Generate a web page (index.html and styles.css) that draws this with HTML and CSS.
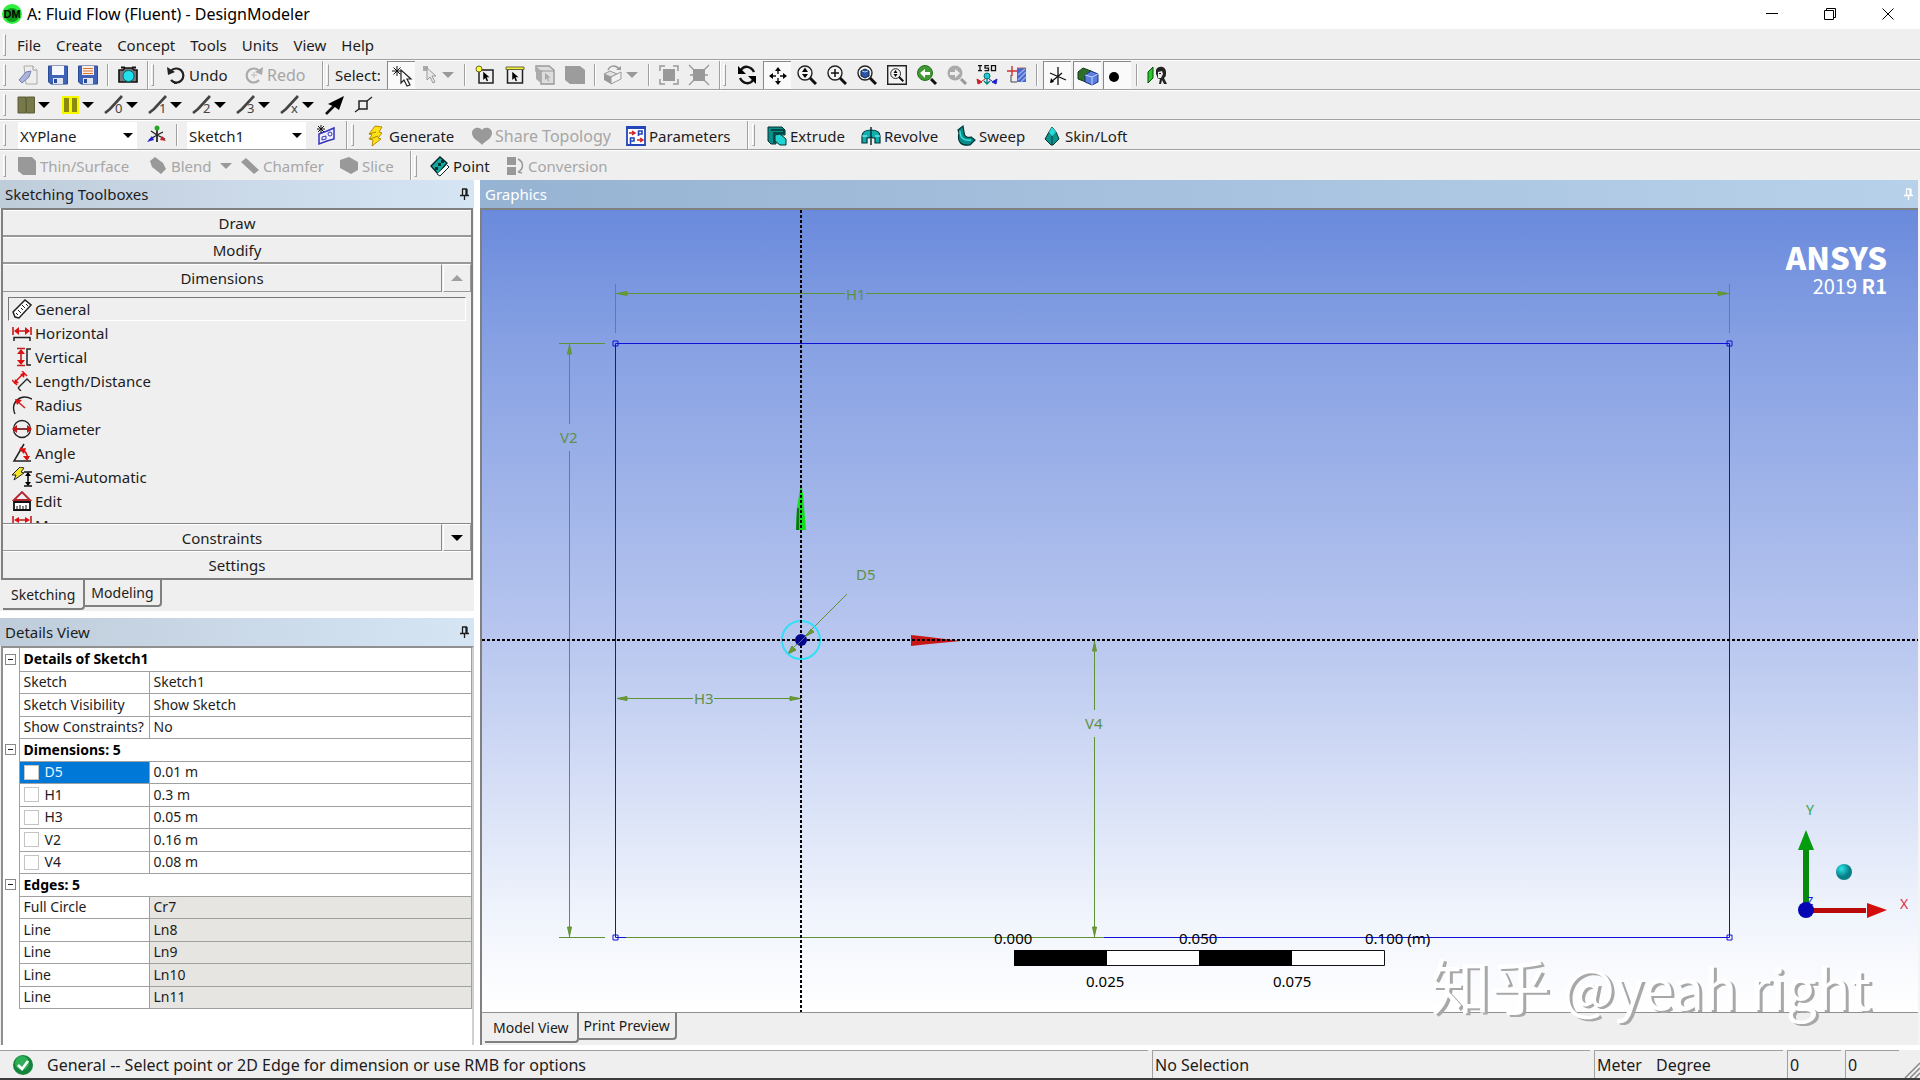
FILE: index.html
```html
<!DOCTYPE html>
<html lang="en">
<head>
<meta charset="utf-8">
<title>A: Fluid Flow (Fluent) - DesignModeler</title>
<link rel="stylesheet" href="styles.css">
</head>
<body>
<svg class="defs" aria-hidden="true">
  <symbol id="cursor" viewBox="0 0 10 16"><path d="M1 1v12l3-3 2 5 2-1-2-5h4z"/></symbol>
  <symbol id="lens" viewBox="0 0 20 20"><circle cx="8" cy="8" r="7" fill="#f4f4f4" stroke="#222" stroke-width="1.4"/><path d="M13 13l6 6" stroke="#111" stroke-width="3"/></symbol>
  <symbol id="edge" viewBox="0 0 20 20"><path d="M1 18l5-4L18 1" fill="none" stroke="#444" stroke-width="2.6"/></symbol>
  <symbol id="pin" viewBox="0 0 9 12"><path d="M2.500 1v6M2 1h5M6 1v6M7 1v6M0 7.500h9M4.500 8v4" fill="none" stroke="currentColor" stroke-width="1.300"/></symbol>
</svg>

<header class="titlebar">
  <svg class="app-icon" viewBox="0 0 20 20"><circle cx="10" cy="10" r="10" fill="#2cf03c"/><circle cx="10" cy="11" r="7" fill="#129a1c"/><text x="10" y="14" text-anchor="middle" class="app-letters">DM</text></svg>
  <h1>A: Fluid Flow (Fluent) - DesignModeler</h1>
  <div class="window-buttons">
    <button aria-label="Minimize"><svg viewBox="0 0 12 12"><path d="M0 5.500h12"/></svg></button>
    <button aria-label="Restore"><svg viewBox="0 0 12 12"><path d="M.5 2.500h9v9h-9zM2.500 2V.5h9v9H10"/></svg></button>
    <button aria-label="Close"><svg viewBox="0 0 12 12"><path d="M.5.5l11 11M11.500.5l-11 11"/></svg></button>
  </div>
</header>

<nav class="menubar">
  <i class="grip"></i>
  <button>File</button><button>Create</button><button>Concept</button><button>Tools</button><button>Units</button><button>View</button><button>Help</button>
</nav>

<div class="toolrow">
  <div class="bar bar-file">
    <i class="grip"></i>
    <button aria-label="New"><svg viewBox="0 0 20 20"><path d="M6 1h9l4 4v14H8z" fill="#eee" stroke="#aaa"/><path d="M1 15l7-8 5-1-2 6-7 6z" fill="#aab4dc" stroke="#777fae"/><path d="M15 1v4h4" fill="#fff" stroke="#999"/></svg></button>
    <button aria-label="Save"><svg viewBox="0 0 20 20"><path d="M.5 1h19v18H3L.5 17z" fill="#3f63b8" stroke="#2b4a94"/><path d="M4 1h12v9H4z" fill="#f4f6fb"/><path d="M5 13h10v6H5z" fill="#dfe4f0"/><path d="M6 14h3v4H6z" fill="#2b4a94"/></svg></button>
    <button aria-label="Save as"><svg viewBox="0 0 20 20"><path d="M.5 1h19v18H3L.5 17z" fill="#3f63b8" stroke="#2b4a94"/><path d="M4 1h12v9H4z" fill="#fbeee4"/><path d="M5 3.500h10M5 6h10M5 8.500h10" stroke="#d8742c"/><path d="M5 13h10v6H5z" fill="#dfe4f0"/><path d="M6 14h3v4H6z" fill="#2b4a94"/></svg></button>
    <i class="sep"></i>
    <button aria-label="Image capture"><svg viewBox="0 0 20 20"><path d="M1 5h4l2-2h7l2 2h3v12H1z" fill="#777" stroke="#111" stroke-width="1.600"/><path d="M3 2.500h4M14 2.500h4" stroke="#111" stroke-width="2"/><circle cx="10.500" cy="11" r="5.500" fill="#1fe0ec" stroke="#067"/></svg></button>
  </div>
  <div class="bar bar-history">
    <i class="grip"></i>
    <button class="labelled"><svg viewBox="0 0 20 20"><path d="M5 6a7 7 0 1 1 0 9" fill="none" stroke="#222" stroke-width="2.200"/><path d="M1 2l1 8 7-3z" fill="#222"/><path d="M8 18h3" stroke="#222" stroke-width="2"/></svg>Undo</button>
    <button class="labelled" disabled><svg viewBox="0 0 20 20"><path d="M15 6a7 7 0 1 0 0 9" fill="none" stroke="#aaa" stroke-width="2.200"/><path d="M19 2l-1 8-7-3z" fill="#aaa"/><path d="M7 10h6M10 7v6" stroke="#bbb"/></svg>Redo</button>
  </div>
  <div class="bar bar-select">
    <i class="grip"></i>
    <span class="caption">Select:</span>
    <button class="pressed" aria-label="New selection"><svg viewBox="0 0 20 20"><path d="M5 0v10M0 5h10M1.500 1.500l7 7M8.500 1.500l-7 7" stroke="#111"/><path d="M9 4v13l3-3 3 6 3-1-3-6h4z" fill="#fff" stroke="#222" stroke-width="1.200"/></svg></button>
    <button class="drop muted mode" aria-label="Selection mode" disabled><svg viewBox="0 0 20 20"><path d="M3 1h5v5H3z" fill="#aaa"/><path d="M7 3v12l3-3 3 6 2-1-3-6h4z" fill="#e8e8e8" stroke="#999"/></svg></button>
    <i class="sep"></i>
    <button aria-label="Points"><svg viewBox="0 0 20 20"><path d="M4 5h14v13H4z" fill="none" stroke="#222" stroke-width="1.500"/><circle cx="4" cy="4" r="3" fill="#fcfc40" stroke="#662"/><use href="#cursor" x="7" y="6" width="8" height="11"/></svg></button>
    <button aria-label="Edges"><svg viewBox="0 0 20 20"><path d="M2.500 4v14h15V4" fill="none" stroke="#222" stroke-width="1.500"/><path d="M1 2h18v2.500H1z" fill="#f4f43c" stroke="#663"/><use href="#cursor" x="6" y="6" width="8" height="11"/></svg></button>
    <button aria-label="Faces" disabled><svg viewBox="0 0 20 20"><path d="M1 1h13l5 4v14H6V6H1z" fill="#ddd" stroke="#999" stroke-width="1.400"/><path d="M1 1v13l5 4V6z" fill="#aaa"/><path d="M6 6h13" stroke="#999"/><use href="#cursor" x="9" y="7" width="7" height="10" fill="#aaa"/></svg></button>
    <button aria-label="Bodies" disabled><svg viewBox="0 0 20 20"><path d="M0 1h15l5 4v14H5l-5-4z" fill="#9c9c9c"/></svg></button>
    <i class="sep"></i>
    <button class="drop muted" aria-label="Extend selection" disabled><svg viewBox="0 0 20 20"><path d="M0 9l7 3v7l-7-4z" fill="#999"/><path d="M0 9l6-3 7 3-6 3z" fill="#e2e2e2" stroke="#999"/><path d="M7 12l10-5v7L7 19z" fill="#f2f2f2" stroke="#999"/><path d="M4 5c2-5 8-5 11-1" fill="none" stroke="#999" stroke-width="1.500"/><path d="M12 5h5V1z" fill="#999"/></svg></button>
    <i class="sep"></i>
    <button aria-label="Expand" disabled><svg viewBox="0 0 20 20"><path d="M4 4h12v12H4z" fill="#999"/><path d="M1 6V1h5M14 1h5v5M19 14v5h-5M6 19H1v-5" fill="none" stroke="#999" stroke-width="1.500"/></svg></button>
    <button aria-label="Shrink" disabled><svg viewBox="0 0 20 20"><path d="M4 4h12v12H4z" fill="#999"/><path d="M0 0l5 5M20 0l-5 5M0 20l5-5M20 20l-5-5M1 10h18" stroke="#999" stroke-width="1.400"/></svg></button>
  </div>
  <div class="bar bar-view">
    <i class="grip"></i>
    <button aria-label="Rotate"><svg viewBox="0 0 20 20"><path d="M17 7C14 1 7 0 4 5M3 13c3 6 10 7 13 2" fill="none" stroke="#111" stroke-width="2.400"/><path d="M1 1v8h8zM19 19v-8h-8z"/></svg></button>
    <button class="pressed" aria-label="Pan"><svg viewBox="0 0 20 20"><path d="M10 1l3 4H7zM10 19l3-4H7zM1 10l4-3v6zM19 10l-4-3v6z"/><path d="M10 4v4M10 12v4M4 10h4M12 10h4" stroke="#111" stroke-width="1.400"/></svg></button>
    <button aria-label="Zoom"><svg viewBox="0 0 20 20"><use href="#lens"/><path d="M8 2.500L11 7H5zM8 13l3-4H5z"/></svg></button>
    <button aria-label="Box zoom"><svg viewBox="0 0 20 20"><use href="#lens"/><path d="M8 4v8M4 8h8" stroke="#111" stroke-width="1.500"/></svg></button>
    <button aria-label="Zoom to fit"><svg viewBox="0 0 20 20"><use href="#lens"/><path d="M4 6l4-2 4 2v5l-4 2-4-2z" fill="#2c55a8" stroke="#123"/><path d="M5 6l3 1 3-1" fill="none" stroke="#aaccff"/></svg></button>
    <button aria-label="Magnifier window"><svg viewBox="0 0 20 20"><path d="M.7.7h18.600v18.600H.7z" fill="#f4f4f4" stroke="#222" stroke-width="1.400"/><use href="#lens" x="3" y="3" width="14" height="14"/><path d="M8.500 5l2 3h-4zM8.500 12l2-3h-4z"/></svg></button>
    <button aria-label="Previous view"><svg viewBox="0 0 20 20"><circle cx="8" cy="8" r="7.500" fill="#3f9a34" stroke="#277020"/><path d="M14 14l5 5" stroke="#111" stroke-width="3"/><path d="M3 8l5-4v3h5v3H8v3z" fill="#fff"/></svg></button>
    <button aria-label="Next view" disabled><svg viewBox="0 0 20 20"><circle cx="8" cy="8" r="7.500" fill="#aaa"/><path d="M14 14l5 5" stroke="#999" stroke-width="3"/><path d="M13 8L8 4v3H3v3h5v3z" fill="#eee"/></svg></button>
    <button aria-label="Isometric view"><svg viewBox="0 0 20 20"><path d="M1 .7h4M3 .7v5M1 5.700h4M12 .7H8v2.500h3.500v2.500H7.500M14.500.7h4v5h-4z" fill="none" stroke="#111" stroke-width="1.300"/><circle cx="10" cy="11" r="3" fill="#23c8d0" stroke="#077"/><path d="M10 13v6M7 16l3 3 3-3" fill="none" stroke="#088" stroke-width="1.400"/><path d="M0 14l1 5 4-2zM5 16l3-2" fill="#c22" stroke="#c22"/><path d="M20 14l-1 5-4-2zM15 16l-3-2" fill="#22c" stroke="#22c"/></svg></button>
    <button aria-label="Look at"><svg viewBox="0 0 20 20"><path d="M10 3h9v14h-9z" fill="#4a68d0"/><path d="M11 10l7-6M11 15l8-8M14 17l5-5" stroke="#9db2f0" stroke-width="1.300"/><path d="M10 17H4V10" fill="none" stroke="#444"/><path d="M5 1v10M0 6h10" stroke="#c33" stroke-width="1.400"/><path d="M10 3h9" stroke="#a66"/></svg></button>
    <i class="sep"></i>
    <button class="pressed" aria-label="Display plane"><svg viewBox="0 0 20 20"><path d="M10 1v18M2 7l16 7M3 16l11-9" stroke="#111" stroke-width="1.300"/><path d="M2 17l1-5 3 4z"/></svg></button>
    <button class="pressed" aria-label="Display model"><svg viewBox="0 0 20 20"><path d="M0 6l5-4 8 3v8l-5 3-8-3z" fill="#2d6e2a" stroke="#123a12"/><path d="M7 9l6-4 7 3v8l-6 3-7-3z" fill="#5b7fe0" stroke="#1c2f80"/><path d="M7 9l7 2 6-3M14 11v8" fill="none" stroke="#c4d2ff"/></svg></button>
    <button class="pressed" aria-label="Display points"><svg viewBox="0 0 20 20"><circle cx="6" cy="11" r="5"/></svg></button>
    <i class="sep"></i>
    <button aria-label="Look at face"><svg viewBox="0 0 20 20"><path d="M1 7l5-5v11l-5 5z" fill="#28c82c" stroke="#0a4a0c"/><path d="M9 5c2-5 10-4 10 2 0 3 0 5-2 6l3 6h-3l-2-4-1 4h-2l1-5c-2 0-3-1-3-3l-1-2z" fill="#222"/><path d="M11 7l4-1 1 3-2 4h-3z" fill="#ececec"/><path d="M12 8.500h2" stroke="#222"/></svg></button>
  </div>
</div>

<div class="toolrow">
  <div class="bar bar-edges">
    <i class="grip"></i>
    <button class="drop" aria-label="Face colour"><svg viewBox="0 0 20 20"><path d="M2 2h8v16H2zM10.500 2h8v16h-8z" fill="#77794a" stroke="#5d5f34"/></svg></button>
    <button class="drop" aria-label="Edge colour"><svg viewBox="0 0 20 20"><path d="M3 2h7v16H3zM11 2h7v16h-7z" fill="#8a8a10" stroke="#f7f700" stroke-width="2"/></svg></button>
    <button class="drop" aria-label="Edges 0"><svg viewBox="0 0 20 20"><use href="#edge"/><text x="11" y="18">0</text></svg></button>
    <button class="drop" aria-label="Edges 1"><svg viewBox="0 0 20 20"><use href="#edge"/><text x="11" y="18">1</text></svg></button>
    <button class="drop" aria-label="Edges 2"><svg viewBox="0 0 20 20"><use href="#edge"/><text x="11" y="18">2</text></svg></button>
    <button class="drop" aria-label="Edges 3"><svg viewBox="0 0 20 20"><use href="#edge"/><text x="11" y="18">3</text></svg></button>
    <button class="drop" aria-label="Edges x"><svg viewBox="0 0 20 20"><use href="#edge"/><text x="11" y="18">x</text></svg></button>
    <button aria-label="Edge direction"><svg viewBox="0 0 20 20"><path d="M1 19l9-9" stroke="#111" stroke-width="2.600"/><path d="M19 1l-5 14-4-3-7-3z"/></svg></button>
    <button aria-label="Display vertices"><svg viewBox="0 0 20 20"><path d="M4 6h8v8H4z" fill="none" stroke="#222" stroke-width="1.500"/><path d="M12 6l5-4M4 14l-4 3" stroke="#222" stroke-width="1.300"/></svg></button>
  </div>
</div>

<div class="toolrow">
  <div class="bar bar-plane">
    <i class="grip"></i>
    <span class="combo"><select aria-label="Active plane"><option>XYPlane</option></select></span>
    <button aria-label="New plane"><svg viewBox="0 0 20 20"><path d="M10 1v16" stroke="#111" stroke-width="1.600"/><path d="M10 10l8 4M10 10l-8 5M4 6l6 4 6-3" fill="none" stroke="#222" stroke-width="1.300"/><circle cx="10" cy="3" r="2.500" fill="#2a2"/><path d="M19 16l-6-1 2-4z" fill="#c22"/><path d="M0 17l5-6 2 4z" fill="#22c"/></svg></button>
    <i class="sep"></i>
    <span class="combo"><select aria-label="Active sketch"><option>Sketch1</option></select></span>
    <button aria-label="New sketch"><svg viewBox="0 0 20 20"><path d="M3 9l8-3 7-3v11l-7 2-8 3z" fill="#eef" stroke="#33b" stroke-width="1.500"/><circle cx="14" cy="9" r="2" fill="none" stroke="#33b"/><path d="M6 12l4-1v3l-4 1z" fill="none" stroke="#33b"/><path d="M5 0v8M1 4h8M2 1l6 6M8 1L2 7" stroke="#111"/></svg></button>
  </div>
  <div class="bar bar-generate">
    <i class="grip"></i>
    <button class="labelled"><svg viewBox="0 0 20 20"><path d="M9 0l7 1-3 5 3 1-4 5 3 1L6 20l1-6-4-1 3-4-3-1z" fill="#ffe11a" stroke="#b38f00"/><path d="M3 8l7-2M4 13l8-3" stroke="#a80"/></svg>Generate</button>
    <button class="labelled" disabled><svg viewBox="0 0 20 20"><path d="M10 4c3-4 10-2 10 3 0 6-7 8-10 12C7 15 0 13 0 7c0-5 7-7 10-3z" fill="#999"/></svg>Share Topology</button>
    <button class="labelled"><svg viewBox="0 0 20 20"><path d="M1 1h18v18H1z" fill="#fff" stroke="#2346b8" stroke-width="1.800"/><path d="M0 0h20v3H0z" fill="#2346b8"/><path d="M3 7h5M6 5l3 2-3 2M11 14h5M14 12l3 2-3 2" fill="none" stroke="#c22" stroke-width="1.400"/><path d="M12.500 10V5h3.500v3h-3M4.500 18v-6H8v3H5" fill="none" stroke="#2346b8" stroke-width="1.600"/></svg>Parameters</button>
  </div>
  <div class="bar bar-features">
    <i class="grip"></i>
    <button class="labelled"><svg viewBox="0 0 20 20"><path d="M1 1h14l3 3v5H9v9H4l-3-3z" fill="#0b8c88" stroke="#033"/><path d="M4 4h13v3H7v10" fill="none" stroke="#033" stroke-width="1.400"/><path d="M8 9l5-1 6 5v6h-6l-5-4z" fill="#1fd3d0" stroke="#033"/></svg>Extrude</button>
    <button class="labelled"><svg viewBox="0 0 20 20"><path d="M1 17v-7c0-4 4-6 9-6s9 2 9 6v7h-5v-5h-2l-2-1-2 1H6v5z" fill="#11aeb0" stroke="#033" stroke-width="1.200"/><path d="M10 1v18" stroke="#033" stroke-width="1.500"/><path d="M1 10h5M14 10h5" stroke="#9ff"/></svg>Revolve</button>
    <button class="labelled"><svg viewBox="0 0 20 20"><path d="M2 4l5-4 1 6c0 5 4 6 7 5l4 3-5 5c-9 1-13-3-11-12z" fill="#0b8c88" stroke="#033" stroke-width="1.200"/><path d="M4 5c0 7 4 10 11 9" fill="none" stroke="#3be0dc" stroke-width="1.500"/></svg>Sweep</button>
    <button class="labelled"><svg viewBox="0 0 20 20"><path d="M10 1l4 5 3 7-6 6H9l-6-6 4-7z" fill="#0f918c" stroke="#033"/><path d="M10 1l4 5-4 4-3-4z" fill="#25dcd8"/><path d="M10 10v9" stroke="#044"/></svg>Skin/Loft</button>
  </div>
</div>

<div class="toolrow last">
  <div class="bar bar-modify">
    <i class="grip"></i>
    <button class="labelled" disabled><svg viewBox="0 0 20 20"><path d="M1 1h14l4 4v14H6l-5-4z" fill="#999"/></svg>Thin/Surface</button>
    <button class="labelled more" disabled><svg viewBox="0 0 20 20"><path d="M2 5l5-4 8 6 3 6-5 5-9-7z" fill="#999"/></svg>Blend</button>
    <button class="labelled" disabled><svg viewBox="0 0 20 20"><path d="M1 6l5-4 13 12-5 4z" fill="#999"/></svg>Chamfer</button>
    <button class="labelled" disabled><svg viewBox="0 0 20 20"><path d="M1 4l9-3 9 5v8l-7 4-11-6z" fill="#999"/></svg>Slice</button>
  </div>
  <div class="bar bar-point">
    <i class="grip"></i>
    <button class="labelled"><svg viewBox="0 0 20 20"><path d="M1 10l9-9 7 6-9 11z" fill="#13a8a0" stroke="#022" stroke-width="1.300"/><path d="M17 9l2 2-9 9-3-2" fill="#fff" stroke="#022"/><path d="M8 7h3v3H8zM5 11h3v3H5zM11 4h3v3h-3z" fill="#033"/></svg>Point</button>
    <button class="labelled" disabled><svg viewBox="0 0 20 20"><path d="M2 1h9v8H2zM2 11h9v8H2z" fill="#999"/><path d="M13 3c6 3 6 10 0 13M13 16l4 1" fill="none" stroke="#999" stroke-width="1.500"/></svg>Conversion</button>
  </div>
</div>

<main class="workspace">
  <aside class="sidebar">
    <section class="dock toolboxes">
      <h2 class="dock-title">Sketching Toolboxes<svg class="pin"><use href="#pin"/></svg></h2>
      <div class="accordion">
        <button class="drawer">Draw</button>
        <button class="drawer">Modify</button>
        <div class="drawer-row"><button class="drawer">Dimensions</button><button class="scroll up" aria-label="Scroll up" disabled></button></div>
        <ul class="tools">
          <li><button class="chosen"><svg viewBox="0 0 20 20"><path d="M1 13L13 1l6 5L7 19l-4-1z" fill="#fff" stroke="#222" stroke-width="1.500"/><path d="M6 16l-2-2M9 14l-3-3M11 11l-2-2M13 9l-3-3M16 7l-2-2" stroke="#222"/></svg>General</button></li>
          <li><button><svg viewBox="0 0 20 20"><path d="M1 4v8M19 4v8M4 8h12" stroke="#c11d1d" stroke-width="1.600"/><path d="M2 8l5-4v8zM18 8l-5-4v8z" fill="#d11"/><path d="M2 18v-3.500h16V18" fill="none" stroke="#222" stroke-width="1.500"/></svg>Horizontal</button></li>
          <li><button><svg viewBox="0 0 20 20"><path d="M5 1.500h8M5 18.500h8M9 3v14" stroke="#c11d1d" stroke-width="1.600"/><path d="M9 2l4 5H5zM9 18l4-5H5z" fill="#d11"/><path d="M19 2h-4v16h4" fill="none" stroke="#222" stroke-width="1.500"/></svg>Vertical</button></li>
          <li><button><svg viewBox="0 0 20 20"><path d="M6 17l9-9 4 4M6 17l3 3" fill="none" stroke="#222" stroke-width="1.300"/><path d="M2 12L12 2M0 9l5 5M10 0l5 5" stroke="#d11" stroke-width="1.500"/><path d="M2 13l1-5 4 4zM13 2L8 3l4 4z" fill="#d11"/></svg>Length/Distance</button></li>
          <li><button><svg viewBox="0 0 20 20"><path d="M3 19C-2 8 8-2 20 4" fill="none" stroke="#222" stroke-width="1.400"/><path d="M4 5l9 8" stroke="#c22" stroke-width="1.500"/><path d="M3 4l7 1-5 5z" fill="#d11"/></svg>Radius</button></li>
          <li><button><svg viewBox="0 0 20 20"><circle cx="10" cy="10" r="8.500" fill="none" stroke="#222" stroke-width="1.300"/><path d="M1 10h18" stroke="#722" stroke-width="1.800"/><path d="M0 10l5-4v8zM20 10l-5-4v8z" fill="#c11"/></svg>Diameter</button></li>
          <li><button><svg viewBox="0 0 20 20"><path d="M12 1L2 18h17" fill="none" stroke="#222" stroke-width="1.500"/><path d="M8 5c5 2 7 5 8 11" fill="none" stroke="#c11" stroke-width="1.400"/><path d="M7 6l7-1-2 6zM11 13l7 0-3 5z" fill="#d11"/></svg>Angle</button></li>
          <li><button><svg viewBox="0 0 20 20"><path d="M8 0l4 1-3 4 3 1-10 7 2-5-4 0z" fill="#f4e52a" stroke="#222"/><path d="M12 5h8M12 19h8M16 6v12" stroke="#111" stroke-width="1.600"/><path d="M16 5l3 4h-6zM16 19l3-4h-6z"/></svg>Semi-Automatic</button></li>
          <li><button><svg viewBox="0 0 20 20"><path d="M2 9l8-8 8 8z" fill="#eee" stroke="#b3262e" stroke-width="1.800"/><path d="M2 11h16v8H2z" fill="#fff" stroke="#111" stroke-width="1.800"/><path d="M5 18v-3M8 18v-4M11 18v-3M14 18v-4" stroke="#111"/></svg>Edit</button></li>
          <li><button><svg viewBox="0 0 20 20"><path d="M1 1v12M19 1v12M4 5h12" stroke="#c11d1d" stroke-width="1.600"/><path d="M2 5l5-3v6zM18 5l-5-3v6z" fill="#d11"/></svg>Move</button></li>
        </ul>
        <div class="drawer-row"><button class="drawer">Constraints</button><button class="scroll down" aria-label="Scroll down"></button></div>
        <button class="drawer">Settings</button>
      </div>
      <div class="tabs"><button class="tab current">Sketching</button><button class="tab">Modeling</button></div>
    </section>

    <section class="dock details">
      <h2 class="dock-title">Details View<svg class="pin"><use href="#pin"/></svg></h2>
      <div class="grid-wrap">
        <table>
          <colgroup><col class="c-gutter"><col class="c-name"><col></colgroup>
          <tbody>
          <tr><td><button class="fold" aria-label="Collapse"></button></td><th colspan="2">Details of Sketch1</th></tr>
          <tr><td></td><td>Sketch</td><td>Sketch1</td></tr>
          <tr><td></td><td>Sketch Visibility</td><td>Show Sketch</td></tr>
          <tr><td></td><td>Show Constraints?</td><td>No</td></tr>
          <tr><td><button class="fold" aria-label="Collapse"></button></td><th colspan="2">Dimensions: 5</th></tr>
          <tr><td></td><td class="selected"><label><input type="checkbox">D5</label></td><td>0.01 m</td></tr>
          <tr><td></td><td><label><input type="checkbox">H1</label></td><td>0.3 m</td></tr>
          <tr><td></td><td><label><input type="checkbox">H3</label></td><td>0.05 m</td></tr>
          <tr><td></td><td><label><input type="checkbox">V2</label></td><td>0.16 m</td></tr>
          <tr><td></td><td><label><input type="checkbox">V4</label></td><td>0.08 m</td></tr>
          <tr><td><button class="fold" aria-label="Collapse"></button></td><th colspan="2">Edges: 5</th></tr>
          <tr><td></td><td>Full Circle</td><td class="fixed">Cr7</td></tr>
          <tr><td></td><td>Line</td><td class="fixed">Ln8</td></tr>
          <tr><td></td><td>Line</td><td class="fixed">Ln9</td></tr>
          <tr><td></td><td>Line</td><td class="fixed">Ln10</td></tr>
          <tr><td></td><td>Line</td><td class="fixed">Ln11</td></tr>
          </tbody>
        </table>
      </div>
    </section>
  </aside>

  <section class="graphics">
    <h2 class="dock-title active">Graphics<svg class="pin"><use href="#pin"/></svg></h2>
    <div class="viewport">
      <svg class="scene" viewBox="482 210 1436 802" preserveAspectRatio="xMidYMin meet">
        <g class="sketch"><path d="M626 937.500H615.500v-594h1114v594H1104"/>
          <path d="M613 341h5v5h-5zM1727 341h5v5h-5zM613 935h5v5h-5zM1727 935h5v5h-5z"/></g>
        <g class="dims">
          <path d="M615.500 284v49M1729.500 284v49M616 293.500h229M866 293.500h863M559 343.500h46M559 937.500h46M569.500 344v80M569.500 451v486M626 937.500h478M617 698.500h76M714 698.500h87M1094.500 641v69M1094.500 737v200M847 594l-59 59"/>
          <path class="heads" d="M617 293.500l10-2v4zM1728 293.500l-10-2v4zM569.500 345l-2 9h4zM569.500 936l-2-9h4zM617 698.500l10-2v4zM800 698.500l-10-2v4zM1094.500 642l-2 9h4zM1094.500 936l-2-9h4zM806 636l8-4-3-3zM788 654l8-4-4-4z"/>
          <text x="846" y="300">H1</text><text x="560" y="443">V2</text><text x="694" y="704">H3</text><text x="1085" y="729">V4</text><text x="856" y="580">D5</text>
        </g>
        <circle cx="801" cy="640" r="19" class="hole"/>
        <path d="M801 484l2 10 1 12 2 24h-10l1-22 2-13z" fill="#12e01c"/><path d="M797 508h2v22h-3z" fill="#0b7a12"/>
        <path d="M911 635l18 2 32 4-32 3-18 2z" fill="#c81616"/>
        <path class="axes" d="M801 210v802M482 640h1436"/>
        <circle cx="801" cy="640" r="6" fill="#04048c"/>
        <path d="M797 645l9-9" stroke="#5a6a9a"/>
        <g class="scale">
          <path d="M1014.500 950.500h370v15h-370z" class="frame"/><path d="M1014 950h93v16h-93zM1199 950h93v16h-93z"/>
          <text x="994" y="944">0.000</text><text x="1179" y="944">0.050</text><text x="1365" y="944">0.100 (m)</text><text x="1086" y="987">0.025</text><text x="1273" y="987">0.075</text>
        </g>
      </svg>
      <div class="brand"><strong>ANSYS</strong><span>2019 <b>R1</b></span></div>
      <svg class="triad" viewBox="0 0 120 120">
        <defs><radialGradient id="ball" cx=".35" cy=".3"><stop offset="0" stop-color="#2ee6ea"/><stop offset="1" stop-color="#067f86"/></radialGradient></defs>
        <path d="M13 48h6v58h-6z" fill="#078a0d"/><path d="M16 29l8 20H8z" fill="#069c10"/>
        <path d="M20 107h56v5H20z" fill="#b90a0a"/><path d="M77 102l20 7-20 8z" fill="#d40d0d"/>
        <text x="17" y="104" class="z">Z</text>
        <circle cx="16" cy="109" r="8" fill="#0505b4"/><circle cx="54" cy="71" r="8" fill="url(#ball)"/>
        <text x="16" y="14" class="y">Y</text><text x="110" y="108" class="x">X</text>
      </svg>
      <div class="watermark"><span>知乎</span> @yeah right</div>
    </div>
    <div class="tabs"><button class="tab current">Model View</button><button class="tab">Print Preview</button></div>
  </section>
</main>

<footer class="status">
  <div class="cell message"><svg viewBox="0 0 20 20"><circle cx="10" cy="10" r="10" fill="#14853a"/><circle cx="9" cy="8" r="7" fill="#2fae58"/><path d="M5 10l4 4 6-8" fill="none" stroke="#fff" stroke-width="2.600"/></svg>General -- Select point or 2D Edge for dimension or use RMB for options</div>
  <div class="cell picked">No Selection</div>
  <div class="cell units"><span>Meter</span><span>Degree</span></div>
  <div class="cell count">0</div>
  <div class="cell count">0</div>
  <svg class="resize" viewBox="0 0 16 16"><path d="M1 16L16 1M6 16L16 6M11 16l5-5" stroke="#888" stroke-width="1.500"/></svg>
</footer>
</body>
</html>
```
FILE: styles.css
```css
* { box-sizing: border-box; }
body {
  margin: 0;
  height: 100vh;
  display: flex;
  flex-direction: column;
  overflow: hidden;
  background: #fff;
  color: #1c1c1c;
  font: 15px/20px "Noto Sans", "Noto Sans CJK SC", sans-serif;
}
button, select, input {
  font: inherit;
  color: inherit;
  margin: 0;
  padding: 0;
  border: 0;
  border-radius: 0;
  background: none;
}
h1, h2 { margin: 0; font-weight: 400; }
.defs { position: absolute; width: 0; height: 0; }

/* title bar */
.titlebar { flex: none; height: 29px; display: flex; align-items: center; padding: 0 3px 2px 2px; color: #000; }
.titlebar h1 { flex: 1; font-size: 16px; line-height: 20px; margin-left: 5px; }
.app-icon { width: 20px; height: 20px; overflow: visible; }
.app-letters { font: bold 11px "Liberation Sans", sans-serif; fill: #000; }
.window-buttons { display: flex; }
.window-buttons button { width: 58px; height: 27px; display: grid; place-items: center; }
.window-buttons svg { width: 12px; height: 12px; fill: none; stroke: #000; }

/* menus and tool rows */
.menubar { flex: none; height: 31px; display: flex; align-items: center; gap: 1px; padding-top: 2px; background: #efefef; border-bottom: 1px solid #a0a0a0; }
.menubar .grip { margin-right: 3px; }
.menubar button { padding: 0 7px; height: 28px; }
.toolrow { flex: none; height: 30px; display: flex; background: #efefef; border-top: 1px solid #fff; border-bottom: 1px solid #a0a0a0; }
.toolrow.last { border-bottom: 0; }
.grip { flex: none; width: 3px; height: 22px; margin: 3px 7px 3px 3px; border: 1px solid #fff; border-right-color: #a0a0a0; border-bottom-color: #a0a0a0; align-self: center; }
.bar { flex: none; display: flex; align-items: center; border-right: 1px solid #a0a0a0; box-shadow: 1px 0 #fff; }
.bar:last-child { border-right: 0; box-shadow: none; }
.bar button { flex: none; width: 30px; height: 28px; display: flex; align-items: center; justify-content: center; white-space: nowrap; }
.bar svg { flex: none; width: 20px; height: 20px; overflow: visible; }
.bar button.drop { width: 44px; justify-content: flex-start; padding-left: 4px; gap: 2px; }
.drop::after, .more::after, .combo::after {
  content: "";
  border: 6px solid transparent;
  border-top-color: #000;
  border-bottom: 0;
}
.muted::after, .more::after { border-top-color: #999; }
.bar button.labelled { width: auto; justify-content: flex-start; gap: 3px; }
.bar button:disabled { color: #a6a6a6; }
.bar button.labelled:disabled { font-size: 16px; }
.last .bar button.labelled:disabled { font-size: 15px; }
.bar button.more::after { margin-left: 5px; }
.bar button.pressed { background: #fafafa; border-left: 1px solid #888; border-top: 1px solid #888; width: 28px; margin: 0 1px; }
.sep { flex: none; width: 1px; height: 22px; margin: 0 5px 0 4px; background: #a0a0a0; box-shadow: 1px 0 #fff; }
.bar text { font: 13px "Noto Sans", sans-serif; fill: #444; }
.bar-file { width: 148px; }
.bar-history { width: 175px; }
.bar-history .grip { margin-right: 12px; }
.bar-history button.labelled { width: 78px; }
.bar-select { width: 397px; }
.bar-select .caption { width: 51px; margin-left: -1px; }
.bar-edges .grip { margin-right: 6px; }
.bar-view .grip { margin-right: 6px; }
.bar-plane { width: 347px; }
.bar-plane .combo { margin: 1px 5px 0; }
.combo { position: relative; width: 119px; height: 27px; background: #fff; }
.combo select { width: 100%; height: 100%; appearance: none; padding-left: 2px; }
.combo::after { position: absolute; right: 4px; top: 11px; border-width: 5px; border-bottom-width: 0; }
.bar-generate { display: grid; grid-template-columns: 18px 106px 154px 124px; width: 401px; padding-left: 1px; }
.bar-features { display: grid; grid-template-columns: 18px 94px 95px 86px 100px; padding-left: 1px; }
.bar-generate .labelled, .bar-features .labelled { padding-top: 1px; }
.bar-modify { display: grid; grid-template-columns: 17px 131px 92px 99px 72px; width: 411px; }
.bar-point { display: grid; grid-template-columns: 19px 75px 110px; }

/* dock panels */
.workspace { flex: 1; min-height: 0; display: flex; gap: 6px; border-bottom: 5px solid #fff; }
.sidebar { flex: none; width: 474px; display: flex; flex-direction: column; gap: 7px; }
.dock { display: flex; flex-direction: column; background: #efefef; }
.dock-title { flex: none; height: 28px; display: flex; align-items: center; justify-content: space-between; padding: 0 5px; font-size: 15px; background: linear-gradient(90deg, #bfcddb, #d6e5f4); }
.dock-title.active { background: linear-gradient(90deg, #97b3d3, #b7d1ea); color: #fff; }
.pin { width: 9px; height: 12px; }
.toolboxes { height: 431px; }
.accordion { flex: 1; min-height: 0; display: flex; flex-direction: column; margin: 0 1px; border: 2px solid #808080; }
.drawer { flex: none; height: 27px; border-bottom: 2px solid #999; border-top: 1px solid #fff; text-align: center; line-height: 24px; }
.drawer-row { flex: none; height: 28px; display: flex; }
.drawer-row .drawer { flex: 1; height: auto; border-right: 1px solid #888; border-bottom-width: 1px; }
.accordion > .drawer:last-child { border-bottom: 0; }
.scroll { width: 28px; display: grid; place-items: center; border: 1px solid #fff; border-right-color: #999; border-bottom-color: #999; margin-left: 1px; }
.scroll::after { content: ""; border: 6px solid transparent; }
.scroll.up::after { border-bottom-color: #a0a0a0; border-top: 0; }
.scroll.down::after { border-top-color: #000; border-bottom: 0; }
.tools { flex: 1; min-height: 0; overflow: hidden; list-style: none; margin: 0; padding: 5px 5px 0; }
.tools + .drawer-row { border-top: 1px solid #888; }
.tools button { display: flex; align-items: center; gap: 3px; width: 100%; height: 24px; padding-left: 3px; border: 1px solid transparent; }
.tools svg { width: 20px; height: 20px; }
.tools button.chosen { border-color: #777 #fff #fff #777; }
.tabs { flex: none; height: 31px; display: flex; align-items: flex-start; background: #efefef; padding-left: 3px; font-size: 14px; }
.tab { height: 27px; padding: 0 6px; border-right: 2px solid #808080; border-bottom: 2px solid #808080; border-radius: 0 0 4px 0; line-height: 24px; }
.tab.current { height: 30px; padding: 0 8px; line-height: 30px; }
.details { flex: 1; min-height: 0; }
.grid-wrap { flex: 1; background: #fff; border: 2px solid #909090; border-bottom: 0; border-right-color: #d0d0d0; margin-left: 1px; }

/* property table */
table { width: 100%; table-layout: fixed; border-collapse: collapse; font-size: 14px; line-height: 18px; }
.c-gutter { width: 16px; }
.c-name { width: 130px; }
tr { height: 22px; }
tr:nth-child(odd) { height: 23px; }
td, th { padding: 0 4px; border: 1px solid #a0a0a0; border-top: 0; text-align: left; white-space: nowrap; }
td:first-child { padding: 0; border-bottom: 0; border-left: 0; }
th { font-weight: 700; color: #000; }
.fold { display: block; width: 11px; height: 11px; margin: 0 auto; border: 1px solid #888; }
.fold::after { content: ""; display: block; height: 1px; margin: 4px 2px; background: #222; }
td label { display: flex; align-items: center; gap: 6px; }
td input { appearance: none; width: 15px; height: 15px; background: #fff; border: 1px solid #c4c4c4; }
.selected { background: #0078d7; color: #e8f4ff; }
.fixed { background: #e6e5e1; }

/* graphics window */
.graphics { flex: 1; min-width: 0; display: flex; flex-direction: column; border-right: 2px solid #f4f4f4; }
.graphics .tabs { height: 33px; border-left: 2px solid #808080; border-top: 1px solid #909090; }
.graphics .tab { padding: 0 5px; }
.graphics .tab.current { padding: 0 8px; }
.viewport {
  flex: 1;
  min-height: 0;
  position: relative;
  border-left: 2px solid #808080;
  border-top: 2px solid #808080;
  background: linear-gradient(#6a8adc 0%, #87a1e3 17%, #b8c6ef 53%, #d6dff6 72%, #f0f4fc 88%, #fff 100%);
}
.scene { display: block; width: 100%; height: 100%; }
.sketch path { fill: none; stroke: #1010d8; stroke-width: 1; }
.dims path { fill: none; stroke: #5f9236; stroke-width: 1; }
.dims .heads { fill: #6f9a30; }
.dims text { fill: #5f9048; font-size: 15px; }
.hole { fill: none; stroke: #2fe0f6; stroke-width: 2; }
.axes { fill: none; stroke: #000; stroke-width: 2; stroke-dasharray: 3 2; }
.scale text { font-size: 15px; fill: #000; }
.scale .frame { fill: #fff; stroke: #111; }
.brand { position: absolute; right: 31px; top: 30px; display: flex; flex-direction: column; align-items: flex-end; color: #fff; font: 20px/24px "Noto Sans CJK SC", sans-serif; }
.brand strong { font-weight: 900; font-size: 31px; line-height: 34px; }
.triad { position: absolute; right: 8px; bottom: 91px; width: 120px; height: 120px; }
.triad text { font-size: 14px; }
.triad .x { fill: #e0304a; }
.triad .y { fill: #35a04a; }
.triad .z { fill: #1414d8; font-size: 11px; }
.watermark { position: absolute; right: 47px; bottom: -14px; z-index: 1; font: 55px/80px "Noto Sans CJK SC", sans-serif; color: #fff; text-shadow: 3px 2px #a8a8a8; white-space: nowrap; }
.watermark span { font-size: 60px; }

/* status bar */
.status { flex: none; height: 30px; display: flex; gap: 4px; padding-right: 21px; background: #efefef; border-bottom: 2px solid #3c3c3c; position: relative; font-size: 16px; }
.cell { display: flex; align-items: center; border-top: 1px solid #a0a0a0; border-left: 1px solid #a0a0a0; padding-left: 2px; white-space: nowrap; }
.message { flex: 1; padding-left: 13px; gap: 14px; border-left: 0; }
.message svg { width: 20px; height: 20px; }
.picked { width: 438px; }
.units { width: 189px; gap: 14px; }
.count { width: 54px; }
.resize { position: absolute; right: 0; bottom: 0; width: 16px; height: 16px; }
```
